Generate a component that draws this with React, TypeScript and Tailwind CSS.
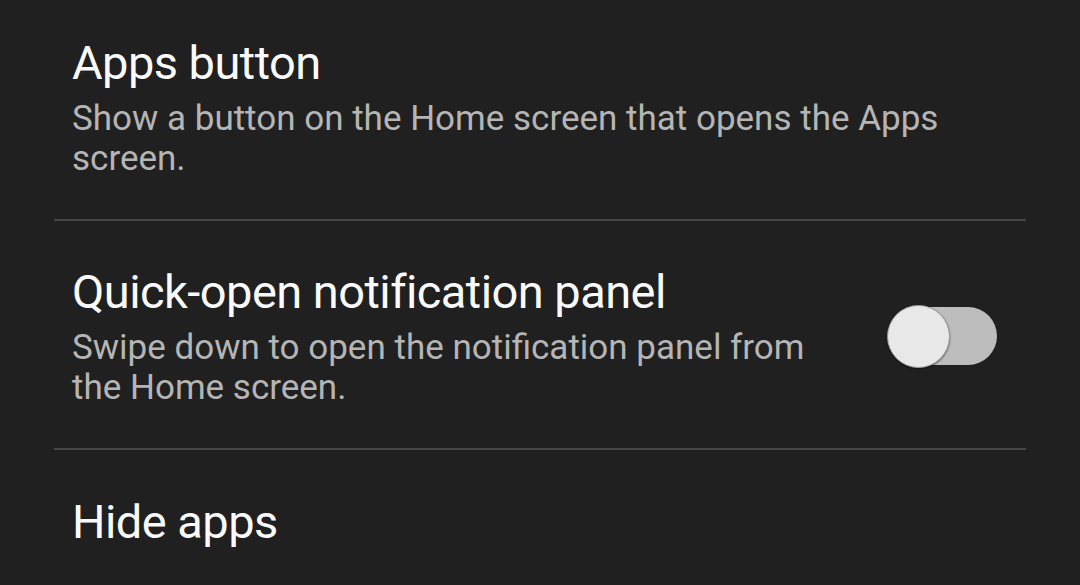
import React from "react";

function Toggle() {
  return (
    <div className="relative w-[112px] h-[64px] flex items-center shrink-0">
      <div className="absolute left-[6px] right-[2px] h-[58px] rounded-full bg-[#bdbdbd]" />
      <div className="absolute left-0 w-[63px] h-[63px] rounded-full bg-[#e8e8e8] border border-[#9a9a9a] shadow-[0_1px_2px_rgba(0,0,0,0.5)]" />
    </div>
  );
}

function Row({
  title,
  subtitle,
  toggle,
}: {
  title: string;
  subtitle?: string;
  toggle?: boolean;
}) {
  return (
    <div className="flex items-center pl-[18px] pr-[27px] pt-[35px] pb-[40px]">
      <div className="flex-1 flex flex-col gap-[8px] min-w-0">
        <div className="text-[47px] leading-[56px] tracking-[-0.55px] text-[#fafafa]">
          {title}
        </div>
        {subtitle && (
          <div
            className={`text-[35px] leading-[40px] text-[#b5b5b5] ${
              toggle ? "pr-[70px]" : ""
            }`}
          >
            {subtitle}
          </div>
        )}
      </div>
      {toggle && <Toggle />}
    </div>
  );
}

export default function App() {
  return (
    <div
      className="w-[1080px] h-[585px] overflow-hidden bg-[#202020] px-[54px]"
      style={{ fontFamily: "Roboto, 'Noto Sans', sans-serif" }}
    >
      <Row
        title="Apps button"
        subtitle="Show a button on the Home screen that opens the Apps screen."
      />
      <div className="h-[2px] bg-[#464646]" />
      <div className="pt-[8px]">
        <Row
          title="Quick-open notification panel"
          subtitle="Swipe down to open the notification panel from the Home screen."
          toggle
        />
      </div>
      <div className="h-[2px] bg-[#464646]" />
      <div className="pt-[9px]">
        <Row title="Hide apps" />
      </div>
    </div>
  );
}
